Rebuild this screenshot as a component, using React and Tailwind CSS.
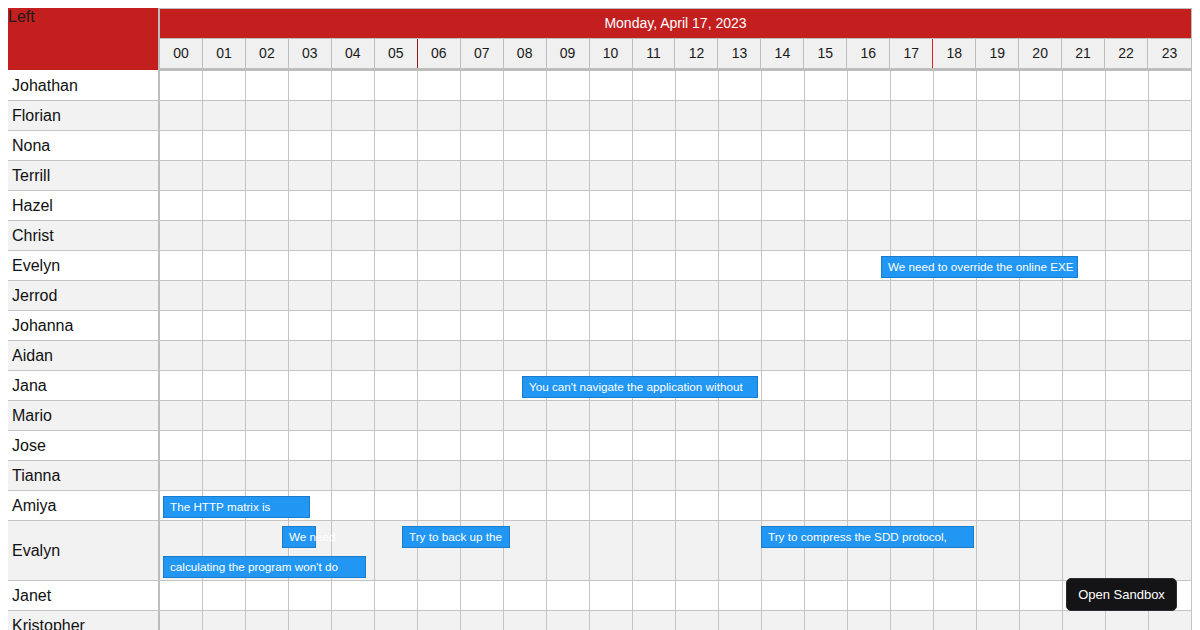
import React from 'react';

const hours = Array.from({ length: 24 }, (_, i) => String(i).padStart(2, '0'));

const rows = [
  { name: 'Johathan' },
  { name: 'Florian' },
  { name: 'Nona' },
  { name: 'Terrill' },
  { name: 'Hazel' },
  { name: 'Christ' },
  { name: 'Evelyn', events: [{ left: 721, top: 5, width: 197, title: 'We need to override the online EXE' }] },
  { name: 'Jerrod' },
  { name: 'Johanna' },
  { name: 'Aidan' },
  { name: 'Jana', events: [{ left: 362, top: 5, width: 236, title: "You can't navigate the application without" }] },
  { name: 'Mario' },
  { name: 'Jose' },
  { name: 'Tianna' },
  { name: 'Amiya', events: [{ left: 3, top: 5, width: 147, title: 'The HTTP matrix is' }] },
  {
    name: 'Evalyn',
    height: 59,
    events: [
      { left: 122, top: 5, width: 34, title: 'We need' },
      { left: 242, top: 5, width: 108, title: 'Try to back up the' },
      { left: 601, top: 5, width: 213, title: 'Try to compress the SDD protocol,' },
      { left: 3, top: 35, width: 203, title: "calculating the program won't do" },
    ],
  },
  { name: 'Janet' },
  { name: 'Kristopher' },
];

const EventBar = ({ ev }) => (
  <div
    className="absolute h-[22px] bg-[#2196f3] border border-[#1c7ccc] text-white text-[11.7px] leading-[20px] pl-[6px] whitespace-nowrap overflow-visible z-10"
    style={{ left: ev.left, top: ev.top, width: ev.width }}
  >
    {ev.title}
  </div>
);

const hourBorder = (i) => {
  if (i === 5) return 'border-r border-[#8a1c1c]';
  if (i === 17) return 'border-r border-[#e02222]';
  if (i < 23) return 'border-r border-[#bdbdbd]';
  return '';
};

const App = () => {
  return (
    <div className="p-2 font-['Liberation_Sans',Arial,sans-serif] bg-white min-h-screen">
      {/* header */}
      <div className="flex">
        <div className="w-[150px] h-[62px] bg-[#c41f1f] text-[16px] leading-[18px] text-[#1b1b1b]">Left</div>
        <div className="flex-1 border-l-2 border-r border-t border-[#bdbdbd]">
          <div className="h-[29px] bg-[#c41f1f] flex items-center justify-center text-white text-[14px]">
            Monday, April 17, 2023
          </div>
          <div className="grid grid-cols-[repeat(24,minmax(0,1fr))] h-[33px] border-t border-b-[3px] border-[#bdbdbd] bg-[#f0f0f0]">
            {hours.map((h, i) => (
              <div
                key={h}
                className={`flex items-center justify-center text-[14px] text-[#1a1a1a] ${hourBorder(i)}`}
              >
                {h}
              </div>
            ))}
          </div>
        </div>
      </div>

      {/* body */}
      {rows.map((row, idx) => {
        const h = row.height || 29;
        return (
          <div
            key={row.name}
            className={`flex border-b border-[#c4c4c4] ${idx % 2 === 1 ? 'bg-[#f2f2f2]' : 'bg-white'}`}
          >
            <div
              className="w-[150px] px-1 flex items-center text-[16px] text-[#111]"
              style={{ height: h }}
            >
              {row.name}
            </div>
            <div
              className="flex-1 relative grid grid-cols-[repeat(24,minmax(0,1fr))] border-l-2 border-[#bdbdbd]"
              style={{ height: h }}
            >
              {hours.map((hr) => (
                <div key={hr} className="border-r border-[#c4c4c4]" />
              ))}
              {(row.events || []).map((ev) => (
                <EventBar key={ev.title} ev={ev} />
              ))}
            </div>
          </div>
        );
      })}

      <button className="fixed bottom-[19px] right-[23px] w-[111px] h-[33px] rounded-[5px] bg-[#141416] border border-[#2c2c30] text-white text-[13px] z-20">
        Open Sandbox
      </button>
    </div>
  );
};

export default App;
